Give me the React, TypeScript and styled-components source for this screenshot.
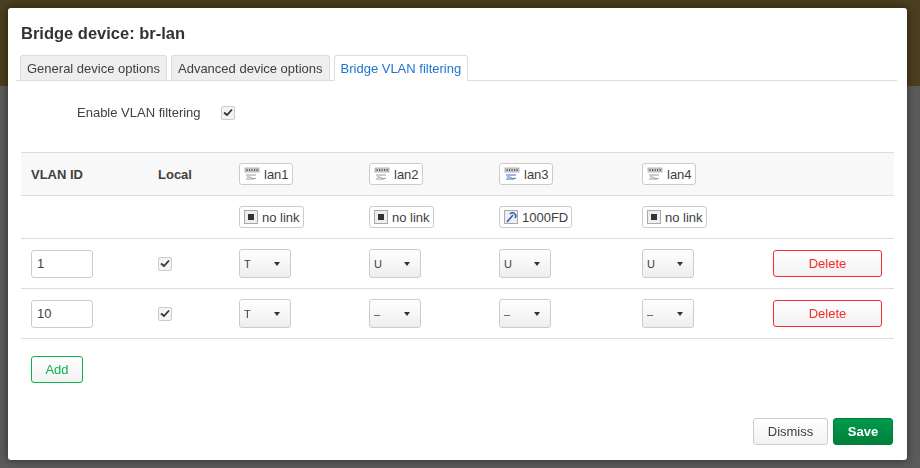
import React from "react";
import styled, { createGlobalStyle } from "styled-components";

const Global = createGlobalStyle`
  html, body { margin: 0; padding: 0; }
  body { width: 920px; height: 468px; overflow: hidden; font-family: "Liberation Sans", Arial, sans-serif; font-size: 13px; color: #404040;
    background: linear-gradient(#4a3f1e 0 86px, #5b5b5b 86px); }
`;

const Overlay = styled.div`
  position: fixed; inset: 0; padding: 8px 13px 8px 8px; box-sizing: border-box;
`;
const Modal = styled.div`
  background: #fff; border-radius: 3px; height: 452px; box-sizing: border-box;
  padding: 14px 13px 0 13px; display: flex; flex-direction: column; box-shadow: 0 0 8px rgba(0,0,0,.5);
`;
const Title = styled.h3`
  margin: 2px 0 12px 0; font-size: 16.5px; font-weight: bold; color: #333; padding-left: 0;
`;
const Tabs = styled.div`
  display: flex; gap: 4px; border-bottom: 1px solid #ddd; padding-left: 4px; margin-left: -5px; margin-right: -3px;
`;
const Tab = styled.div<{ $active?: boolean }>`
  padding: 0 6px; height: 24px; line-height: 25px; border: 1px solid #ddd; border-bottom: none;
  border-radius: 3px 3px 0 0; margin-bottom: -1px; font-size: 13px;
  background: ${p => (p.$active ? "#fff" : "#eee")};
  color: ${p => (p.$active ? "#1d75d0" : "#404040")};
  ${p => p.$active && "height: 25px;"}
`;
const OptionRow = styled.div`
  display: flex; align-items: center; margin: 24px 0 0 56px; gap: 20px;
`;
const Check = styled.span`
  display: inline-flex; width: 12px; height: 12px; border: 1px solid #ccc; border-radius: 2px; background: #f4f4f4;
  align-items: center; justify-content: center;
`;
const Table = styled.div`
  margin-top: 32px; display: flex; flex-direction: column;
`;
const Row = styled.div<{ $h: number; $head?: boolean; $noBorder?: boolean }>`
  display: grid; grid-template-columns: 127px 81px 130px 130px 143px 131px 1fr; align-items: center;
  height: ${p => p.$h}px; padding-left: 10px;
  border-top: 1px solid #ddd;
  ${p => p.$noBorder && "border-top: 1px solid #ddd;"}
  background: ${p => (p.$head ? "#f8f8f8" : "#fff")};
`;
const Th = styled.div`
  font-weight: bold; color: #404040; font-size: 13px;
`;
const Badge = styled.span`
  display: inline-flex; align-items: center; gap: 4px; height: 20px; padding: 0 3px 0 4px; border: 1px solid #ccc;
  border-radius: 3px; justify-self: start; font-size: 13px; color: #404040; background: #fff;
`;
const Input = styled.div`
  width: 62px; height: 28px; border: 1px solid #ccc; border-radius: 3px; box-sizing: border-box; padding-left: 5px;
  display: flex; align-items: center; font-size: 13px; color: #404040;
`;
const Select = styled.div`
  width: 52px; height: 29px; border: 1px solid #ccc; border-radius: 3px; box-sizing: border-box; padding: 0 10px 0 4px;
  display: flex; align-items: center; justify-content: space-between; font-size: 11px; color: #404040;
  background: linear-gradient(#fff, #eee); justify-self: start;
`;
const Caret = styled.span`
  width: 0; height: 0; border-left: 3px solid transparent; border-right: 3px solid transparent; border-top: 4px solid #333;
`;
const Btn = styled.div<{ $tone: "red" | "green" | "plain" | "solid"; $w: number }>`
  width: ${p => p.$w}px; height: 27px; box-sizing: border-box; border-radius: 3px; display: flex; align-items: center;
  justify-content: center; font-size: 13px;
  border: 1px solid ${p => ({ red: "#f32d2d", green: "#0db04c", plain: "#ccc", solid: "#007f3b" }[p.$tone])};
  color: ${p => ({ red: "#f32d2d", green: "#0db04c", plain: "#404040", solid: "#fff" }[p.$tone])};
  background: ${p => (p.$tone === "solid" ? "linear-gradient(#009a4d,#007f3b)" : "linear-gradient(#fff,#f2f2f2)")};
  ${p => p.$tone === "solid" && "font-weight: bold;"}
`;
const AddWrap = styled.div`
  padding: 17px 0 0 10px; border-top: 1px solid #ddd; margin-top: 0;
`;
const Footer = styled.div`
  margin-top: auto; display: flex; justify-content: flex-end; gap: 5px; padding: 0 1px 15px 0;
`;

const Tick = () => (
  <svg width="10" height="9" viewBox="0 0 10 9"><path d="M1 4.5 L4 7 L9 1.5" stroke="#333" strokeWidth="1.8" fill="none" /></svg>
);
const PortIcon = ({ up }: { up?: boolean }) => (
  <svg width="16" height="14" viewBox="0 0 16 14">
    <rect x="1" y="1" width="14" height="4" fill="#ddd" stroke="#888" strokeWidth="0.6" />
    {[2.5, 5, 7.5, 10, 12.5].map(x => <rect key={x} x={x} y="2" width="1.2" height="2" fill="#555" />)}
    <path d="M2 8 H12 M3 10 C6 9 9 13 12 11 M2 12 H10" stroke={up ? "#3a6fc4" : "#999"} strokeWidth="1" fill="none" />
  </svg>
);
const LinkIcon = ({ up }: { up?: boolean }) => (
  <svg width="14" height="14" viewBox="0 0 14 14">
    <rect x="0.5" y="0.5" width="13" height="13" fill="#eee" stroke="#aaa" />
    {up ? <path d="M3 12 L9 5 M6 4 A3 3 0 0 1 11 8" stroke="#2e5fb8" strokeWidth="1.6" fill="none" />
      : <rect x="4" y="4" width="6" height="6" fill="#333" />}
  </svg>
);

const ports = ["lan1", "lan2", "lan3", "lan4"];
const rows = [
  { id: "1", v: ["T", "U", "U", "U"] },
  { id: "10", v: ["T", "–", "–", "–"] },
];

export default function App() {
  return (
    <>
      <Global />
      <Overlay>
        <Modal>
          <Title>Bridge device: br-lan</Title>
          <Tabs>
            <Tab>General device options</Tab>
            <Tab>Advanced device options</Tab>
            <Tab $active>Bridge VLAN filtering</Tab>
          </Tabs>
          <OptionRow>Enable VLAN filtering <Check><Tick /></Check></OptionRow>
          <Table>
            <Row $h={42} $head>
              <Th>VLAN ID</Th><Th>Local</Th>
              {ports.map((p, i) => <Badge key={p}><PortIcon up={i === 2} />{p}</Badge>)}
              <div />
            </Row>
            <Row $h={42}>
              <div /><div />
              {ports.map((p, i) => <Badge key={p}><LinkIcon up={i === 2} />{i === 2 ? "1000FD" : "no link"}</Badge>)}
              <div />
            </Row>
            {rows.map(r => (
              <Row $h={49} key={r.id}>
                <Input>{r.id}</Input>
                <div><Check><Tick /></Check></div>
                {r.v.map((v, i) => <Select key={i}><span>{v}</span><Caret /></Select>)}
                <Btn $tone="red" $w={109}>Delete</Btn>
              </Row>
            ))}
          </Table>
          <AddWrap><Btn $tone="green" $w={52}>Add</Btn></AddWrap>
          <Footer>
            <Btn $tone="plain" $w={75}>Dismiss</Btn>
            <Btn $tone="solid" $w={60}>Save</Btn>
          </Footer>
        </Modal>
      </Overlay>
    </>
  );
}
